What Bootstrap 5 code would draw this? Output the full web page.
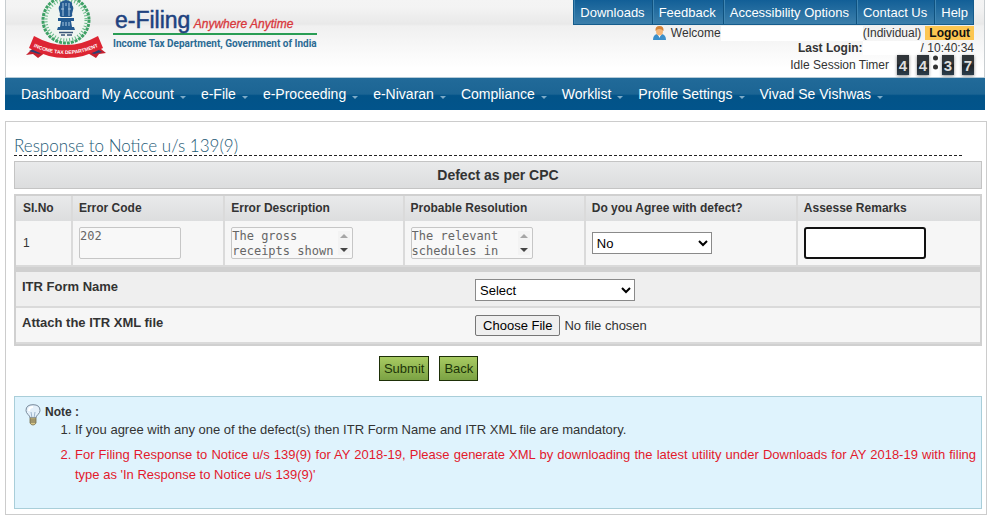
<!DOCTYPE html>
<html lang="en">
<head>
<meta charset="utf-8">
<meta name="viewport" content="width=device-width, initial-scale=1">
<title>e-Filing - Response to Notice</title>
<link href="https://cdn.jsdelivr.net/npm/bootstrap@5.3.0/dist/css/bootstrap.min.css" rel="stylesheet">
<style>
body{font-family:"Liberation Sans",Arial,sans-serif;font-size:12px;line-height:16px;color:#333;background:#fff}
a{text-decoration:none}
.page-wrap{padding:0 9px 0 5px}
.site-top{margin-right:2px}
.masthead{border:solid #c8cdd0;border-width:0 1px;background:linear-gradient(#f4f4f4 0,#f3f3f3 8px,#e9e9e9 24px,#f0f0f0 26px,#fff 68px);padding:0 10px 0 19px;height:77px}
.emblem{width:82px;height:60px;flex:none}
.brand-text{padding:7px 0 0 6px}
.brand-name{font-size:23px;line-height:26px;color:#20427f;-webkit-text-stroke:.5px #20427f;padding-left:2px}
.brand-tag{font-size:12px;font-style:italic;color:#d9383c;-webkit-text-stroke:.3px #d9383c}
.brand-rule{height:2px;background:#2a9d54}
.brand-dept{font-family:Roboto,"Liberation Sans",sans-serif;font-weight:700;font-size:10px;line-height:18px;color:#2a6a93;white-space:nowrap}
.quick-links{background:linear-gradient(#125f97,#3c7fab);border:1px solid #155c8c;border-top:0;height:25px}
.quick-links a{color:#fff;font-size:13px;line-height:25px;padding:0 7px 0 5px;border-right:1px solid #10527f;border-left:1px solid #3f86b3}
.quick-links a:last-child{border-right:0;padding-right:5px}
.masked-name{width:142px;height:15px;background:#fff}
.masked-date{width:58px;height:14px;background:#fff}
.logout{background:#fcc651;color:#111;font-weight:700;padding:0 4px;line-height:14px}
.user-line{height:16px}
.last-login{height:13px;line-height:14px}
.timer{height:22px;gap:8px}
.digit{width:12px;height:20px;background:linear-gradient(#303539 0,#303539 45%,#1f2225 50%,#2c3e4c);color:#ddd;font-size:15px;font-weight:700;line-height:21px;text-align:center;box-shadow:0 1px 3px #888}
.colon{width:5px;height:20px;margin:0 -4px}
.main-nav{background:linear-gradient(#216a99 0,#1c6594 50%,#025388 55%,#02548b);border-top:1px solid #b5cbd8;height:33px;padding-left:16px}
.main-nav a{color:#fff;font-size:14px;line-height:32px;margin-right:12px;white-space:nowrap;padding:0}
.main-nav a.has-menu{margin-right:15px}
.main-nav a.has-menu::after{content:"";display:inline-block;border:3px solid transparent;border-top-color:#7daac6;border-bottom:0;margin-left:6px}
.panel{border:1px solid #ccc;margin-top:11px;padding:15px 4px 5px 8px}
.page-title{font-family:"Century Gothic",Lato,sans-serif;font-weight:300;font-size:17px;line-height:18px;color:#245a75;border-bottom:1px dashed #222;margin:0 20px 5px 0}
.section-bar{background:linear-gradient(#e9eaeb,#dcddde);border:1px solid #c4c4c4;font-size:14px;font-weight:700;line-height:26px;text-align:center;margin-bottom:5px}
.defects,.attach{width:100%;table-layout:fixed;border:2px solid #d0d0d0;border-collapse:separate;border-spacing:0;margin:0}
.defects th{background:linear-gradient(#e9eaeb,#dcddde);font-weight:700;line-height:25px;padding:0 6px}
.defects td{background:#f6f6f6;height:46px;padding:0 6px;vertical-align:middle}
.defects th+th,.defects td+td{border-left:2px solid #dadada}
.defects th:first-child,.defects td:first-child{padding-left:7px}
.defects tbody td{border-bottom:2px solid #dadada}
.attach{border-top:3px solid #d0d0d0}
.attach th{font-size:13px;font-weight:700;padding:7px 6px 5px;vertical-align:top;border-bottom:2px solid #dadada}
.attach td{border-bottom:2px solid #dadada;vertical-align:top;padding:7px 6px 5px}
.attach tr:first-child>*{background:#efefef}
.attach tr:last-child>*{background:#f6f6f6}
.roll-box{width:122px;max-width:100%;position:relative}
.code-box{width:102px}
.roll-box textarea,.code-box textarea{display:block;width:100%;height:32px;resize:none;overflow:hidden;border:1px solid #c6c6c6;border-radius:2px;background:#f8f8f8;color:#666;font:12px/15px "DejaVu Sans Mono",monospace;padding:1px 16px 0 0}
.roll-box svg{position:absolute;right:3px;top:4px;width:12px;height:24px;background:#f3f3f3}
select{border:1px solid #8a8a8a;background:#fff;color:#000;font-size:13px;line-height:16px;height:22px;padding:0}
.agree{width:120px}
.form-pick{width:160px;display:block}
.remarks{width:122px;height:32px;border:2px solid #111;border-radius:3px;background:#fff;outline:0}
.filebox{display:block;font-size:13px;line-height:16px;width:260px;height:22px}
.filebox::file-selector-button{font-size:13px;height:21px;line-height:16px;padding:1px 7px;border:1px solid #767676;border-radius:2px;background:#efefef;color:#000}
.actions{padding:10px 0 15px 37.7%;gap:10px}
.go-btn{background:linear-gradient(#a8cb62,#7ba244);border:1px solid #1e3008;color:#1d3508;font-size:13px;line-height:23px;height:25px;padding:0 4px}
.note{background:#dff3fd;border:1px solid #a9ced9;padding:7px 5px 23px 10px}
.note-head{height:18px;gap:4px}
.note-head svg{width:16px;height:22px;flex:none}
.note ol{margin:0;padding-left:50px;font-size:13px;line-height:16px;color:#333}
.note li+li{color:#e3192c;line-height:20px;margin-top:7px;text-align:justify}
</style>
<script src="https://cdn.jsdelivr.net/npm/bootstrap@5.3.0/dist/js/bootstrap.bundle.min.js"></script>
</head>
<body>
<div class="page-wrap">
<div class="site-top">
<header class="masthead d-flex justify-content-between align-items-start">
  <div class="d-flex">
    <svg class="emblem" viewBox="0 0 82 60" aria-label="Income Tax Department emblem">
      <circle cx="41" cy="20" r="23" fill="#eff5f0"/>
      <circle cx="41" cy="20" r="23" fill="none" stroke="#3fa166" stroke-width="3" stroke-dasharray="3 1"/>
      <circle cx="41" cy="20" r="20" fill="none" stroke="#63b884" stroke-width="3" stroke-dasharray="1 2"/>
      <g fill="#235b91">
        <path d="M35 5q-1-3 3-4 3-2 6 0 4 1 3 4 2 2 1 5l-1 4q1 2-1 3H36q-2-1-1-3l-1-4q-1-3 1-5z"/>
        <path d="M33 18h16v3H33zM36 21h10l1 6H35zM33 27h16l1 3H32z"/>
      </g>
      <path d="M38 3v13M41 3v3m3-3v13M36 9h3m4 0h3M38 22v4m3-4v4m3-4v4" stroke="#a9c8e0" stroke-width="1" fill="none"/>
      <path d="M34 32.500h14M36 35h4m2 0h5" stroke="#3a5778" stroke-width="1.500"/>
      <path d="M11 45L1 55l7-1 5 4 8-6zM71 45l10 8-7 1-3 4-10-6z" fill="#c5202e"/>
      <path d="M4 51l8-3 6 4-4 2zM64 52l6-4 7 4-8 2z" fill="#284173"/>
      <path d="M9 36Q41 54 73 36l5 12Q41 68 4 48z" fill="#dd2533"/>
      <path id="arc" d="M7 46Q41 62 75 46" fill="none"/>
      <text font-family="Liberation Sans,Arial,sans-serif" font-size="5" font-weight="700" fill="#fff"><textPath href="#arc" startOffset="50%" text-anchor="middle">INCOME TAX DEPARTMENT</textPath></text>
    </svg>
    <div class="brand-text">
      <div class="text-nowrap"><span class="brand-name">e-Filing</span> <span class="brand-tag">Anywhere Anytime</span></div>
      <div class="brand-rule"></div>
      <div class="brand-dept">Income Tax Department, Government of India</div>
    </div>
  </div>
  <div class="d-flex flex-column align-items-end text-nowrap">
    <nav class="quick-links d-flex" aria-label="Quick links"><a href="#">Downloads</a><a href="#">Feedback</a><a href="#">Accessibility Options</a><a href="#">Contact Us</a><a href="#">Help</a></nav>
    <div class="user-line d-flex align-items-center">
      <svg width="15" height="15" viewBox="0 0 15 15" class="me-1" aria-hidden="true"><path d="M1 14q0-5 4-6l2.500 3L10 8q4 1 4 6z" fill="#3c8fca"/><path d="M6 8l1.500 4L9 8z" fill="#fff"/><ellipse cx="7.500" cy="5" rx="3.500" ry="4.500" fill="#f3b67a"/><path d="M3.500 5Q3 0 7.500 0t4 5Q10 3 7 3 5 3 3.500 5z" fill="#d48338"/></svg>
      <span>Welcome</span><span class="masked-name"></span><span class="me-1">(Individual)</span><a href="#" class="logout">Logout</a>
    </div>
    <div class="last-login d-flex"><b>Last Login:</b><span class="masked-date"></span><span>/ 10:40:34</span></div>
    <div class="timer d-flex align-items-center"><span>Idle Session Timer</span><span class="digit">4</span><span class="digit">4</span>
      <svg class="colon" viewBox="0 0 5 20" aria-hidden="true"><circle cx="2.500" cy="3" r="2.500" fill="#333"/><circle cx="2.500" cy="12" r="2.500" fill="#333"/></svg>
      <span class="digit">3</span><span class="digit">7</span></div>
  </div>
</header>
<nav class="main-nav d-flex" aria-label="Main">
  <a href="#">Dashboard</a><a href="#" class="has-menu">My Account</a><a href="#" class="has-menu">e-File</a><a href="#" class="has-menu">e-Proceeding</a><a href="#" class="has-menu">e-Nivaran</a><a href="#" class="has-menu">Compliance</a><a href="#" class="has-menu">Worklist</a><a href="#" class="has-menu">Profile Settings</a><a href="#" class="has-menu">Vivad Se Vishwas</a>
</nav>
</div>
<main class="panel">
  <h1 class="page-title">Response to Notice u/s 139(9)</h1>
  <h2 class="section-bar">Defect as per CPC</h2>
  <form>
  <table class="defects">
    <colgroup><col style="width:5.7%"><col style="width:15.8%"><col style="width:18.6%"><col style="width:18.800%"><col style="width:22%"><col></colgroup>
    <thead><tr><th scope="col">SI.No</th><th scope="col">Error Code</th><th scope="col">Error Description</th><th scope="col">Probable Resolution</th><th scope="col">Do you Agree with defect?</th><th scope="col">Assesse Remarks</th></tr></thead>
    <tbody><tr>
      <td>1</td>
      <td><div class="code-box"><textarea readonly aria-label="Error Code">202</textarea></div></td>
      <td><div class="roll-box"><textarea readonly aria-label="Error Description">The gross receipts shown</textarea><svg viewBox="0 0 12 24" aria-hidden="true"><path d="M2 7l4-4 4 4z" fill="#a5a5a5"/><path d="M2 17h8l-4 4z" fill="#444"/></svg></div></td>
      <td><div class="roll-box"><textarea readonly aria-label="Probable Resolution">The relevant schedules in</textarea><svg viewBox="0 0 12 24" aria-hidden="true"><path d="M2 7l4-4 4 4z" fill="#a5a5a5"/><path d="M2 17h8l-4 4z" fill="#444"/></svg></div></td>
      <td><select class="agree" aria-label="Do you Agree with defect?"><option>No</option><option>Yes</option></select></td>
      <td><input type="text" class="remarks" aria-label="Assesse Remarks"></td>
    </tr></tbody>
  </table>
  <table class="attach">
    <colgroup><col style="width:47%"><col></colgroup>
    <tbody>
    <tr><th scope="row"><label for="itrForm">ITR Form Name</label></th><td><select id="itrForm" class="form-pick"><option>Select</option></select></td></tr>
    <tr><th scope="row"><label for="itrXml">Attach the ITR XML file</label></th><td><input type="file" id="itrXml" class="filebox"></td></tr>
    </tbody>
  </table>
  <div class="actions d-flex"><button type="submit" class="go-btn">Submit</button><button type="button" class="go-btn">Back</button></div>
  </form>
  <section class="note">
    <div class="note-head d-flex align-items-start"><svg viewBox="0 0 16 22" aria-hidden="true"><path d="M5 14Q5 12 3 10.500 1 8.500 1 6.500 1 .7 8 .7t7 5.800q0 2-2 4Q11 12 11 14z" fill="#e4f0fa" stroke="#78899a"/><path d="M4 7q0-4 4-4" fill="none" stroke="#fff" stroke-width="2"/><path d="M6 8l1 6m3-6l-1 6" stroke="#9db4cc" fill="none"/><path d="M5 14h6v5q-1 2-3 2t-3-2z" fill="#d8c787" stroke="#756c4a" stroke-width=".8"/><path d="M5 16h6M5 18h6" stroke="#6b6450"/></svg><b>Note :</b></div>
    <ol><li>If you agree with any one of the defect(s) then ITR Form Name and ITR XML file are mandatory.</li><li>For Filing Response to Notice u/s 139(9) for AY 2018-19, Please generate XML by downloading the latest utility under Downloads for AY 2018-19 with filing type as 'In Response to Notice u/s 139(9)'</li></ol>
  </section>
</main>
</div>
</body>
</html>
